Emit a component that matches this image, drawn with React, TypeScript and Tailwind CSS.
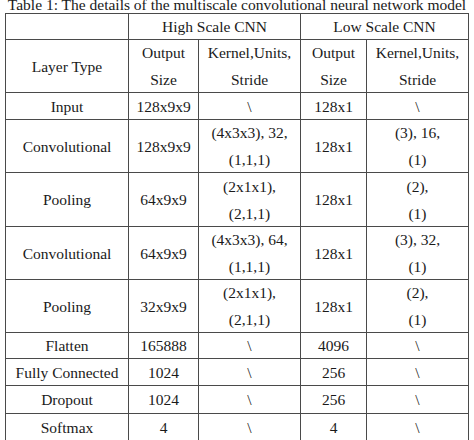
type Row = { name: string; hs: string; hk: string[]; ls: string; lk: string[] };

const rows: Row[] = [
  { name: 'Input', hs: '128x9x9', hk: ['\\'], ls: '128x1', lk: ['\\'] },
  { name: 'Convolutional', hs: '128x9x9', hk: ['(4x3x3), 32,', '(1,1,1)'], ls: '128x1', lk: ['(3), 16,', '(1)'] },
  { name: 'Pooling', hs: '64x9x9', hk: ['(2x1x1),', '(2,1,1)'], ls: '128x1', lk: ['(2),', '(1)'] },
  { name: 'Convolutional', hs: '64x9x9', hk: ['(4x3x3), 64,', '(1,1,1)'], ls: '128x1', lk: ['(3), 32,', '(1)'] },
  { name: 'Pooling', hs: '32x9x9', hk: ['(2x1x1),', '(2,1,1)'], ls: '128x1', lk: ['(2),', '(1)'] },
  { name: 'Flatten', hs: '165888', hk: ['\\'], ls: '4096', lk: ['\\'] },
  { name: 'Fully Connected', hs: '1024', hk: ['\\'], ls: '256', lk: ['\\'] },
  { name: 'Dropout', hs: '1024', hk: ['\\'], ls: '256', lk: ['\\'] },
  { name: 'Softmax', hs: '4', hk: ['\\'], ls: '4', lk: ['\\'] },
];

const serif = { fontFamily: '"Liberation Serif", "Times New Roman", serif' };

function Cell({ lines, className = '' }: { lines: string[]; className?: string }) {
  return (
    <div
      className={`bg-white flex flex-col items-center justify-center text-center text-[15.5px] leading-[27px] whitespace-nowrap ${className}`}
      style={serif}
    >
      {lines.map((l, i) => (
        <span key={i} style={serif}>
          {l}
        </span>
      ))}
    </div>
  );
}

export default function App() {
  return (
    <div className="w-[474px] h-[440px] bg-white overflow-hidden text-[#1a1a1a]" style={serif}>
      <div className="-mt-[3px] h-[16px] text-[15.5px] leading-none whitespace-nowrap text-center">
        Table 1: The details of the multiscale convolutional neural network model
      </div>
      <div className="ml-[5px] w-[464px] grid grid-cols-[122px_69px_101px_65px_101px] grid-rows-[25px_52px_26px_52px_53px_52px_52px_25px_26px_27px_26px] gap-px p-px bg-[#4a4a4a]">
        <div className="bg-white" />
        <Cell lines={['High Scale CNN']} className="col-span-2" />
        <Cell lines={['Low Scale CNN']} className="col-span-2" />
        <Cell lines={['Layer Type']} />
        <Cell lines={['Output', 'Size']} />
        <Cell lines={['Kernel,Units,', 'Stride']} />
        <Cell lines={['Output', 'Size']} />
        <Cell lines={['Kernel,Units,', 'Stride']} />
        {rows.map((r, i) => (
          <div key={i} className="contents">
            <Cell lines={[r.name]} />
            <Cell lines={[r.hs]} />
            <Cell lines={r.hk} />
            <Cell lines={[r.ls]} />
            <Cell lines={r.lk} />
          </div>
        ))}
      </div>
    </div>
  );
}
